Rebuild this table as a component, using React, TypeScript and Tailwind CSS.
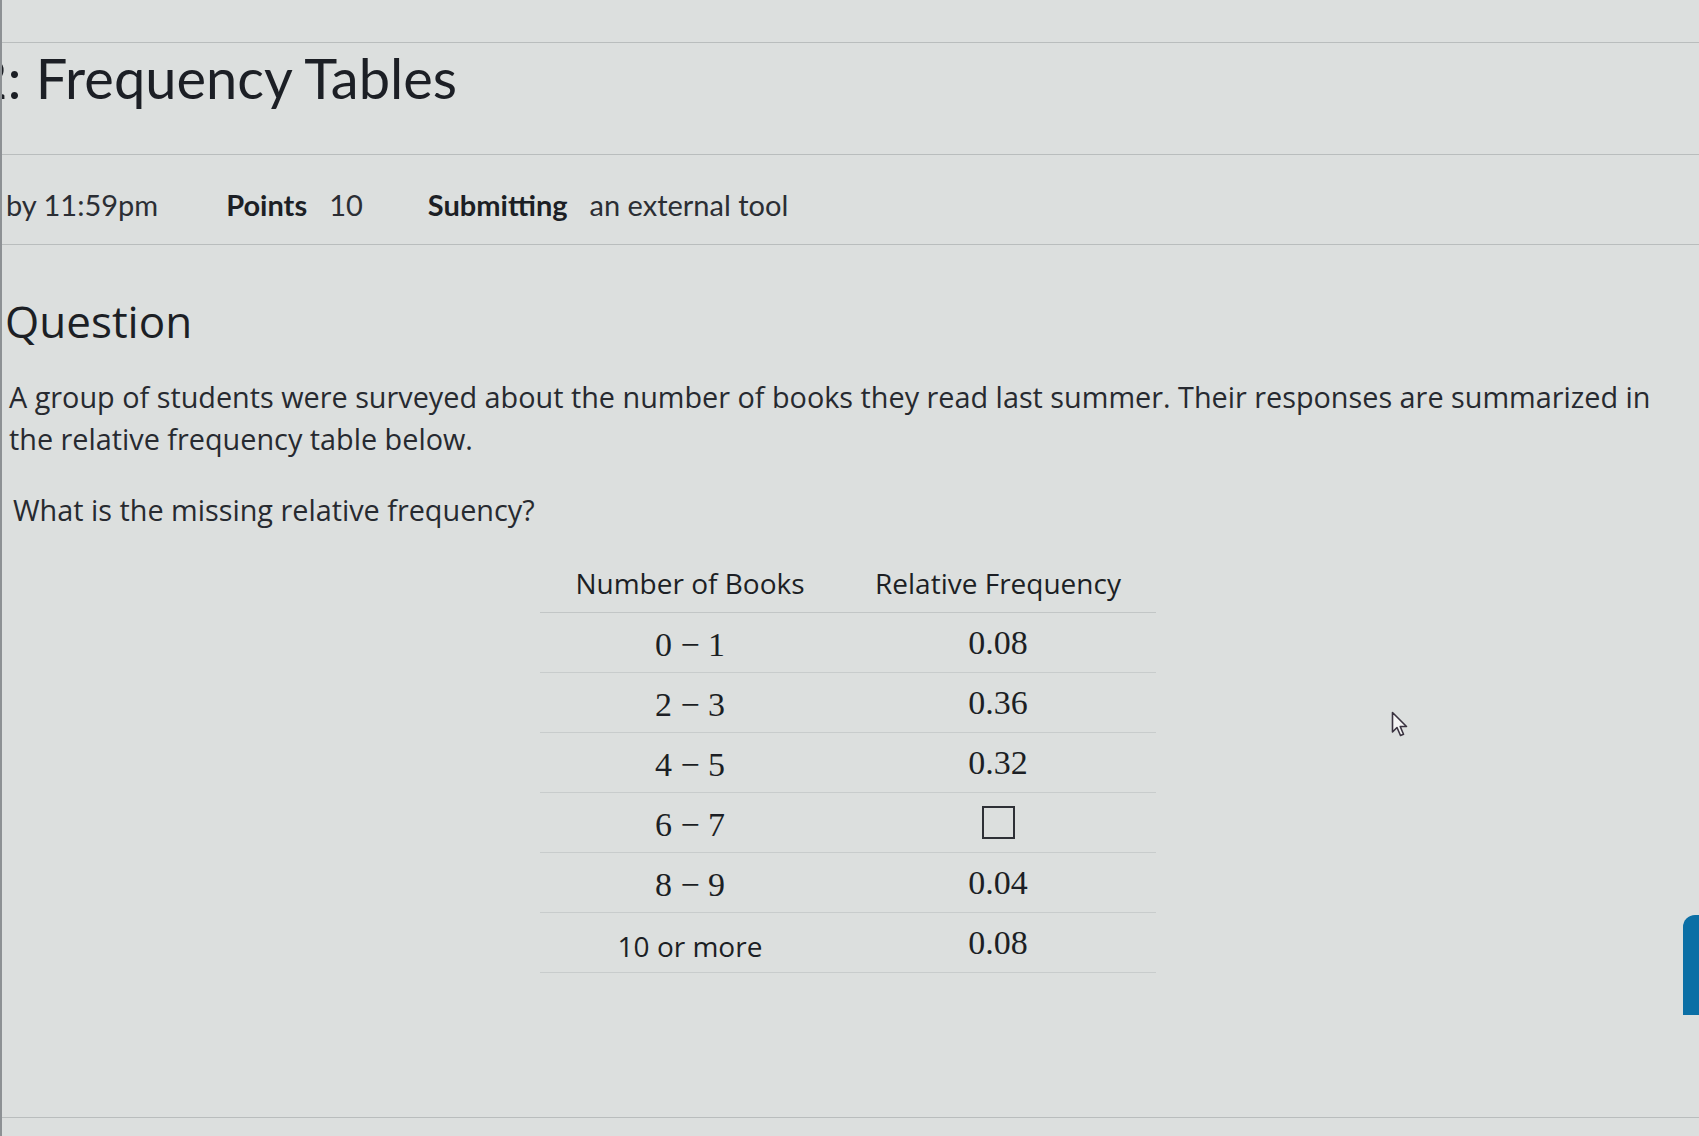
const rows = [
  { range: '0 − 1', value: '0.08' },
  { range: '2 − 3', value: '0.36' },
  { range: '4 − 5', value: '0.32' },
  { range: '6 − 7', value: null },
  { range: '8 − 9', value: '0.04' },
  { range: '10 or more', value: '0.08', plain: true },
];

function Cursor() {
  return (
    <svg className="absolute left-[1389px] top-[711px]" width="18" height="27" viewBox="0 0 18 27">
      <path
        d="M1.5 1.5 L1.5 21 L6 16.5 L9.5 24.5 L12.5 23.2 L9.2 15.5 L15.5 15.5 Z"
        fill="#f4f4f4"
        stroke="#3a3340"
        strokeWidth="1.6"
        strokeLinejoin="round"
      />
    </svg>
  );
}

export default function App() {
  return (
    <div className="relative h-[1136px] w-full overflow-hidden border-l-2 border-[#8d9194] bg-[#dcdfde] text-[#1c1f25]">
      {/* top strip */}
      <div className="h-[43px] border-b border-[#b9bdbd]" />

      {/* Title */}
      <div className="h-[112px] overflow-hidden border-b border-[#b9bdbd] pt-[7px]">
        <h1 className="-ml-[27px] whitespace-nowrap font-['Lato',sans-serif] text-[56px] leading-none font-normal">
          2: Frequency Tables
        </h1>
      </div>

      {/* Meta row */}
      <div className="flex h-[90px] items-start border-b border-[#b9bdbd] pt-[35px] pl-[4px] font-['Lato',sans-serif] text-[29px] leading-none">
        <span className="text-[#2b2e34]">by 11:59pm</span>
        <span className="ml-[68px] font-bold">Points</span>
        <span className="ml-[22px] text-[#2b2e34]">10</span>
        <span className="ml-[65px] font-bold">Submitting</span>
        <span className="ml-[22px] text-[#2b2e34]">an external tool</span>
      </div>

      {/* Question */}
      <div className="font-['Open_Sans','Noto_Sans',sans-serif]">
        <h2 className="mt-[54px] pl-[3px] text-[44px] leading-none font-normal">Question</h2>

        <p className="mt-[33px] w-[1672px] pl-[7px] text-[28.8px] leading-[42px] text-[#272a30]">
          A group of students were surveyed about the number of books they read last summer. Their responses are
          summarized in the relative frequency table below.
        </p>

        <p className="mt-[31px] pl-[11px] text-[28.8px] leading-[38px] text-[#272a30]">
          What is the missing relative frequency?
        </p>

        {/* Table */}
        <div className="ml-[538px] mt-[24px] w-[616px]">
          <div className="grid h-[60px] grid-cols-[300px_316px] items-center border-b border-[#c2c6c6] text-[28px]">
            <div className="text-center">Number of Books</div>
            <div className="text-center">Relative Frequency</div>
          </div>
          {rows.map((r) => (
            <div
              key={r.range}
              className="grid h-[60px] grid-cols-[300px_316px] items-center border-b border-[#c8cccc]"
            >
              <div
                className={
                  r.plain
                    ? 'pt-[6px] text-center text-[28px]'
                    : "pt-[4px] text-center font-['Liberation_Serif','DejaVu_Serif',serif] text-[34px]"
                }
              >
                {r.range}
              </div>
              <div className="flex justify-center font-['Liberation_Serif','DejaVu_Serif',serif] text-[34px]">
                {r.value ?? <span className="block h-[33px] w-[33px] border-2 border-[#2e3036]" />}
              </div>
            </div>
          ))}
        </div>
      </div>

      <Cursor />

      {/* side tab */}
      <div className="absolute right-0 top-[915px] h-[100px] w-[16px] rounded-tl-[12px] bg-[#0b6fa5]" />

      {/* bottom rule */}
      <div className="absolute bottom-[18px] left-0 right-0 border-b border-[#b9bdbd]" />
    </div>
  );
}
